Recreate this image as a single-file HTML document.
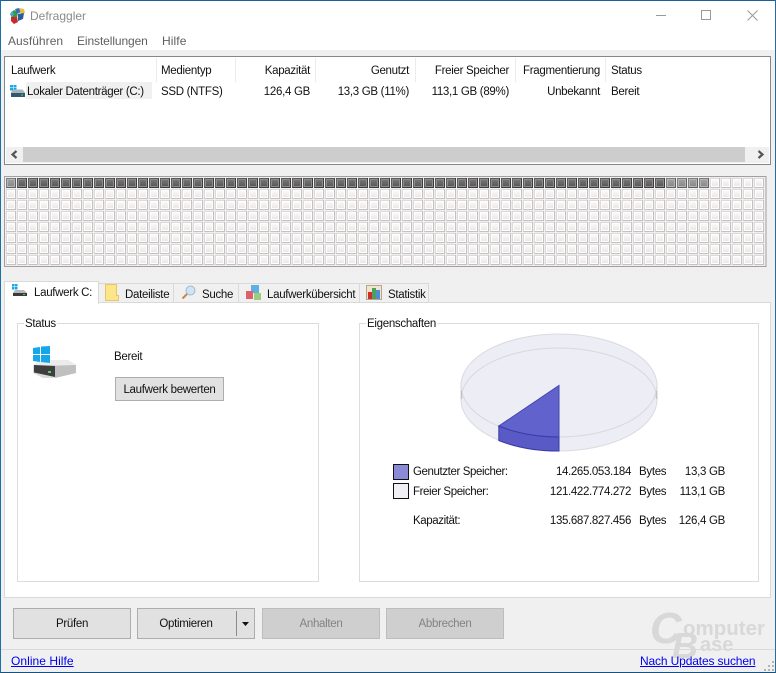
<!DOCTYPE html>
<html lang="de"><head><meta charset="utf-8"><title>Defraggler</title>
<style>
html,body{margin:0;padding:0;width:776px;height:673px;overflow:hidden;background:#f0f0f0}
body{font-family:"Liberation Sans",sans-serif;font-size:11.5px;color:#111;position:relative}
.t{position:absolute;white-space:nowrap;line-height:14px;letter-spacing:-.3px;margin-top:1px}
.r{text-align:right}
.n{letter-spacing:-.35px}
.m{font-size:12px;color:#5f5f5f;letter-spacing:0;margin-top:0}
.b{position:absolute;box-sizing:border-box;}
.btn{position:absolute;box-sizing:border-box;height:31px;top:608px;width:118px;background:#e1e1e1;border:1px solid #adadad;text-align:center;line-height:31px;letter-spacing:-.3px}
.dis{color:#838383;background:#cfcfcf;border-color:#bdbdbd}
.gb{position:absolute;box-sizing:border-box;border:1px solid #dcdcdc;top:323px;height:259px}
.gl{position:absolute;top:-7px;left:6px;background:#fff;padding:0 1px;line-height:15px;letter-spacing:-.3px}
a{color:#0000ee;text-decoration:underline}
svg{position:absolute;display:block}
</style></head><body>
<div class="b" style="left:0;top:0;width:776px;height:50px;background:#fff"></div>

<svg style="left:9px;top:7px" width="17" height="17" viewBox="0 0 17 17"><path d="M1 7 5 3 9 5 8 11 3 11Z" fill="#2f9e44"/><path d="M6 2 10 1 12 5 8 7Z" fill="#3b6fb5"/><path d="M10 1 15 2 16 6 12 7Z" fill="#e8c040"/><path d="M2 10 8 10 9 15 5 17 2 14Z" fill="#c8282c"/><path d="M9 7 15 6 14 12 9 14Z" fill="#2c5c9c"/><path d="M1 7 3 4 5 7 3 10Z" fill="#48a4d8"/></svg>
<div class="t m" style="left:30px;top:9px;color:#8a8a8a">Defraggler</div>
<div class="t m" style="left:8px;top:34px;letter-spacing:.05px">Ausführen</div>
<div class="t m" style="left:77px;top:34px;letter-spacing:-.1px">Einstellungen</div>
<div class="t m" style="left:162px;top:34px;letter-spacing:.1px">Hilfe</div>
<svg style="left:650px;top:6px" width="126" height="20" viewBox="0 0 126 20"><path d="M6 9.500H16" stroke="#999" fill="none"/><rect x="51.500" y="4.500" width="9" height="9" fill="none" stroke="#999"/><path d="M97.500 4.500 107.500 14.500M107.500 4.500 97.500 14.500" stroke="#999" fill="none"/></svg>

<!-- list -->
<div class="b" style="left:4px;top:56px;width:767px;height:109px;background:#fff;border:1px solid #828790"></div>
<svg style="left:0;top:0" width="776" height="100"><path d="M156.500 58V82M235.500 58V82M315.500 58V82M415.500 58V82M515.500 58V82M605.500 58V82" stroke="#ececec"/></svg>
<div class="t" style="left:11px;top:63px">Laufwerk</div>
<div class="t" style="left:161px;top:63px">Medientyp</div>
<div class="t r" style="right:466px;top:63px">Kapazität</div>
<div class="t r" style="right:367px;top:63px">Genutzt</div>
<div class="t r" style="right:267px;top:63px">Freier Speicher</div>
<div class="t r" style="right:176px;top:63px">Fragmentierung</div>
<div class="t" style="left:611px;top:63px">Status</div>
<div class="b" style="left:26px;top:82px;width:126px;height:17px;background:#f0f0f0"></div>
<svg style="left:10px;top:84px" width="16" height="14" viewBox="0 0 16 14"><path d="M0 1h3v2.500H0zM3.500 1h3v2.500h-3zM0 4h3v2.500H0zM3.500 4h3v2.500h-3z" fill="#19a7e8"/><path d="M3 5.500h9.500l2.500 3v4.500H1V8.500Z" fill="#a9b4bc"/><path d="M1 9h14v4H1Z" fill="#34566e"/><path d="M11 10.500h2v1h-2z" fill="#5fd06a"/></svg>
<div class="t" style="left:27px;top:84px">Lokaler Datenträger (C:)</div>
<div class="t" style="left:161px;top:84px">SSD (NTFS)</div>
<div class="t r" style="right:466px;top:84px">126,4 GB</div>
<div class="t r" style="right:367px;top:84px">13,3 GB (11%)</div>
<div class="t r" style="right:267px;top:84px">113,1 GB (89%)</div>
<div class="t r" style="right:176px;top:84px">Unbekannt</div>
<div class="t" style="left:611px;top:84px">Bereit</div>
<div class="b" style="left:6px;top:147px;width:763px;height:16px;background:#f0f0f0"></div>
<div class="b" style="left:23px;top:147px;width:722px;height:15px;background:#cdcdcd"></div>
<svg style="left:6px;top:147px" width="763" height="16"><path d="M10.500 4 6.500 7.500 10.500 11" fill="none" stroke="#555" stroke-width="2.200"/><path d="M752.500 4 756.500 7.500 752.500 11" fill="none" stroke="#555" stroke-width="2.200"/></svg>

<!-- block map -->
<svg style="left:4px;top:176px" width="763" height="91" viewBox="0 0 763 91">
<defs>
<linearGradient id="lg" x1="0" y1="0" x2="0" y2="1"><stop offset="0" stop-color="#f9f8f8"/><stop offset="1" stop-color="#eee6e6"/></linearGradient>
<linearGradient id="dg" x1="0" y1="0" x2="0" y2="1"><stop offset="0" stop-color="#747474"/><stop offset="1" stop-color="#5a5a5a"/></linearGradient>
<linearGradient id="mg" x1="0" y1="0" x2="0" y2="1"><stop offset="0" stop-color="#a0a0a0"/><stop offset="1" stop-color="#8a8a8a"/></linearGradient>
<pattern id="pl" width="11" height="11" patternUnits="userSpaceOnUse" x="2" y="2"><rect x="0" y="0" width="10" height="10" fill="#fff"/><path d="M.5 10V.5H10" fill="none" stroke="#dcdada"/><path d="M.5 9.500H9.500V0" fill="none" stroke="#c4c1c1"/><rect x="2" y="2" width="6" height="6" fill="url(#lg)"/></pattern>
<pattern id="pd" width="11" height="11" patternUnits="userSpaceOnUse" x="2" y="2"><rect x="0" y="0" width="10" height="10" fill="#8c8c8c"/><path d="M.5 10V.5H10" fill="none" stroke="#5c5c5c"/><path d="M.5 9.500H9.500V0" fill="none" stroke="#3c3c3c"/><rect x="2" y="2" width="6" height="6" fill="url(#dg)"/></pattern>
<pattern id="pm" width="11" height="11" patternUnits="userSpaceOnUse" x="2" y="2"><rect x="0" y="0" width="10" height="10" fill="#b4b4b4"/><path d="M.5 10V.5H10" fill="none" stroke="#808080"/><path d="M.5 9.500H9.500V0" fill="none" stroke="#606060"/><rect x="2" y="2" width="6" height="6" fill="url(#mg)"/></pattern>
</defs>
<rect x=".5" y=".5" width="761.500" height="90" fill="#f0eeee" stroke="#a0a0a0"/>
<rect x="2" y="2" width="759" height="88" fill="url(#pl)"/>
<rect x="2" y="2" width="704" height="11" fill="#f0eeee"/>
<rect x="2" y="2" width="704" height="11" fill="url(#pd)"/>
<rect x="662" y="2" width="44" height="11" fill="#f0eeee"/>
<rect x="662" y="2" width="44" height="11" fill="url(#pm)"/>
<rect x="2" y="2" width="11" height="11" fill="#f0eeee"/>
<rect x="2" y="2" width="11" height="11" fill="url(#pm)"/>
</svg>

<!-- tabs -->
<div class="b" style="left:4px;top:302px;width:767px;height:296px;background:#fff;border:1px solid #d9d9d9"></div>
<div class="b" style="left:98px;top:283px;width:76px;height:20px;background:#f0f0f0;border:1px solid #d9d9d9"></div>
<div class="b" style="left:173px;top:283px;width:66px;height:20px;background:#f0f0f0;border:1px solid #d9d9d9"></div>
<div class="b" style="left:238px;top:283px;width:122px;height:20px;background:#f0f0f0;border:1px solid #d9d9d9"></div>
<div class="b" style="left:359px;top:283px;width:70px;height:20px;background:#f0f0f0;border:1px solid #d9d9d9"></div>
<div class="b" style="left:4px;top:281px;width:95px;height:23px;background:#fff;border:1px solid #d9d9d9;border-bottom:0"></div>
<svg style="left:11px;top:284px" width="18" height="14" viewBox="0 0 18 14"><path d="M1 0h2.500v2.500H1zM4 0h2.500v2.500H4zM1 3h2.500v2.500H1zM4 3h2.500v2.500H4z" fill="#19a7e8"/><path d="M4 6h9l3 3v2H2V9Z" fill="#b8b8b8"/><path d="M2 9h14v3H2Z" fill="#3b3b3b"/><path d="M12 10h2v1h-2z" fill="#4fd060"/></svg>
<div class="t" style="left:34px;top:285px">Laufwerk C:</div>
<svg style="left:105px;top:284px" width="14" height="18" viewBox="0 0 14 18"><path d="M.5.500h11v11l2 0v5h-13Z" fill="#fde58a" stroke="#e6c766"/></svg>
<div class="t" style="left:125px;top:287px">Dateiliste</div>
<svg style="left:181px;top:285px" width="16" height="15" viewBox="0 0 16 15"><circle cx="9.500" cy="5.500" r="4.500" fill="#cfe4f6" stroke="#9fb8cc"/><path d="M6 9 1.500 13.500" stroke="#c58a4a" stroke-width="2"/></svg>
<div class="t" style="left:202px;top:287px">Suche</div>
<svg style="left:246px;top:285px" width="15" height="15" viewBox="0 0 15 15"><rect x="5" y="0" width="8" height="8" fill="#5fb0e0"/><rect x="0" y="6" width="7" height="8" fill="#e0606a"/><rect x="8" y="8" width="7" height="7" fill="#9ccc7c"/></svg>
<div class="t" style="left:267px;top:287px">Laufwerkübersicht</div>
<svg style="left:366px;top:285px" width="16" height="15" viewBox="0 0 16 15"><rect x=".5" y=".5" width="15" height="14" fill="#f3e4d0" stroke="#b8a58e"/><rect x="2" y="7" width="4" height="7" fill="#d02c2c"/><rect x="6" y="3" width="4" height="11" fill="#4fa05a"/><rect x="10" y="5" width="4" height="9" fill="#4f8cd4"/></svg>
<div class="t" style="left:388px;top:287px">Statistik</div>

<!-- status group -->
<div class="gb" style="left:17px;width:302px"><div class="gl">Status</div></div>
<svg style="left:33px;top:346px" width="45" height="34" viewBox="0 0 45 34"><path d="M9 14H35L43 19V27L22 32H10L0 27V19Z" fill="#dcdcdc"/><path d="M9 14H35L43 19H0Z" fill="#ebebeb"/><path d="M22 20 43 19V27L22 32Z" fill="#c0c0c0"/><path d="M1 19 22 20V31L1 26.500Z" fill="#3e3e3e"/><rect x="15" y="25" width="3" height="2" fill="#54d06a"/><path d="M0 2 7 1V8H0ZM8 0.500 17 0V8H8ZM0 9H7V16L0 15ZM8 9H17V17L8 16Z" fill="#14a8ea"/></svg>
<div class="t" style="left:114px;top:349px">Bereit</div>
<div class="b" style="left:115px;top:377px;width:109px;height:24px;background:#e1e1e1;border:1px solid #adadad;text-align:center;line-height:24px;letter-spacing:-.3px;white-space:nowrap">Laufwerk bewerten</div>

<!-- properties group -->
<div class="gb" style="left:359px;width:400px"><div class="gl">Eigenschaften</div></div>
<svg style="left:455px;top:330px" width="210" height="126" viewBox="455 330 210 126">
<path d="M461 385.500V399.500A98 51.500 0 0 0 657 399.500V385.500A98 51.500 0 0 0 461 385.500Z" fill="#ecedf5" stroke="#dadae0"/>
<path d="M461 399.500A98 51.500 0 0 1 657 399.500" fill="none" stroke="#d8d8de"/>
<path d="M461 385.500A98 51.500 0 0 0 657 385.500" fill="none" stroke="#d8d8de"/>
<path d="M461.500 391V399M656.500 391V399" stroke="#c4c4c4" stroke-width="1.500"/>
<path d="M559 385.500V437A98 51.500 0 0 1 498.800 426Z" fill="#6262cc" stroke="#4444b4"/>
<path d="M498.800 426A98 51.500 0 0 0 559 437V451A98 51.500 0 0 1 498.800 440.500Z" fill="#5a5ac6" stroke="#3a3aa8"/>
</svg>
<div class="b" style="left:393px;top:464px;width:16px;height:16px;background:#8a8ad6;border:1px solid #111"></div>
<div class="b" style="left:393px;top:483px;width:16px;height:16px;background:#f0f0f6;border:1px solid #111"></div>
<div class="t" style="left:413px;top:464px;letter-spacing:-.4px">Genutzter Speicher:</div>
<div class="t r n" style="right:145px;top:464px">14.265.053.184</div>
<div class="t" style="left:639px;top:464px">Bytes</div>
<div class="t r" style="right:51px;top:464px">13,3 GB</div>
<div class="t" style="left:413px;top:484px;letter-spacing:-.4px">Freier Speicher:</div>
<div class="t r n" style="right:145px;top:484px">121.422.774.272</div>
<div class="t" style="left:639px;top:484px">Bytes</div>
<div class="t r" style="right:51px;top:484px">113,1 GB</div>
<div class="t" style="left:413px;top:513px;letter-spacing:-.4px">Kapazität:</div>
<div class="t r n" style="right:145px;top:513px">135.687.827.456</div>
<div class="t" style="left:639px;top:513px">Bytes</div>
<div class="t r" style="right:51px;top:513px">126,4 GB</div>

<!-- watermark -->
<div class="t" style="left:650px;top:606px;font-size:44px;line-height:44px;font-weight:bold;font-style:italic;color:#d8d8d8;letter-spacing:0">C</div>
<div class="t" style="left:683px;top:617px;font-size:20.500px;line-height:22px;font-weight:bold;color:#d8d8d8;letter-spacing:0">omputer</div>
<div class="t" style="left:672px;top:627px;font-size:36px;line-height:36px;font-weight:bold;font-style:italic;color:#d8d8d8;letter-spacing:0">B</div>
<div class="t" style="left:700px;top:633px;font-size:20px;line-height:22px;font-weight:bold;color:#d8d8d8;letter-spacing:0">ase</div>

<!-- buttons -->
<div class="btn" style="left:13px">Prüfen</div>
<div class="btn" style="left:137px;padding-right:20px">Optimieren</div>
<svg style="left:236px;top:611px" width="18" height="25"><path d="M.5 0V25" stroke="#8a8a8a"/><path d="M6 11H13L9.500 15Z" fill="#111"/></svg>
<div class="btn dis" style="left:262px">Anhalten</div>
<div class="btn dis" style="left:386px">Abbrechen</div>

<div class="b" style="left:1px;top:649px;width:774px;height:1px;background:#d9d9d9"></div>
<a class="t" href="#" style="left:11px;top:653px;font-size:12px;letter-spacing:.05px">Online Hilfe</a>
<a class="t" href="#" style="left:640px;top:653px;font-size:12px;letter-spacing:-.14px">Nach Updates suchen</a>
<svg style="left:763px;top:660px" width="12" height="12"><path d="M9 1h2v2H9zM5 5h2v2H5zM9 5h2v2H9zM1 9h2v2H1zM5 9h2v2H5zM9 9h2v2H9z" fill="#b5b5b5"/></svg>

<div class="b" style="left:0;top:0;width:776px;height:673px;border:1px solid #1d6fa8;border-top-color:#1f5f99;border-bottom-color:#17527f;pointer-events:none"></div>
</body></html>
